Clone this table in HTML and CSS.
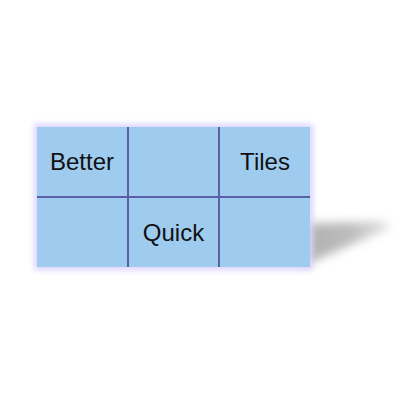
FILE: index.html
```html
<!DOCTYPE html>
<html>
<head>
<meta charset="utf-8">
<link rel="stylesheet" href="styles.css">
</head>
<body>
<div class="stage">
  <div class="board">
    <svg class="shadow" width="90" height="64" viewBox="0 0 90 64">
      <defs>
        <filter id="soft" x="-30%" y="-40%" width="160%" height="180%">
          <feGaussianBlur stdDeviation="5"/>
        </filter>
        <linearGradient id="fade" x1="0" y1="0" x2="1" y2="0">
          <stop offset="0" stop-color="#b0b0b0"/>
          <stop offset="0.55" stop-color="#bcbcbc"/>
          <stop offset="1" stop-color="#e4e4e4"/>
        </linearGradient>
      </defs>
      <polygon points="-8,9 76,6 82,13 -8,52" fill="url(#fade)" filter="url(#soft)"/>
    </svg>
    <div class="grid">
      <div class="tile">Better</div>
      <div class="tile"></div>
      <div class="tile">Tiles</div>
      <div class="tile"></div>
      <div class="tile">Quick</div>
      <div class="tile"></div>
    </div>
  </div>
</div>
</body>
</html>
```
FILE: styles.css
```css
html, body {
  margin: 0;
  padding: 0;
  background: #ffffff;
}
body {
  min-height: 400px;
  overflow: hidden;
}
.stage {
  padding: 127px 0 0 37px;
}
.board {
  position: relative;
  width: 273px;
}
.shadow {
  position: absolute;
  left: 271px;
  top: 88px;
  z-index: 0;
  overflow: visible;
}
.grid {
  position: relative;
  z-index: 1;
  display: grid;
  grid-template-columns: 90px 89px 90px;
  grid-template-rows: 69px 69px;
  gap: 2px;
  background: #5a5fa8;
  box-shadow: 0 0 6px 3px #ddd3ff;
}
.tile {
  background: #9ecbee;
  display: flex;
  align-items: center;
  justify-content: center;
  font-family: "Liberation Sans", Arial, sans-serif;
  font-size: 24px;
  color: #111111;
}
```
